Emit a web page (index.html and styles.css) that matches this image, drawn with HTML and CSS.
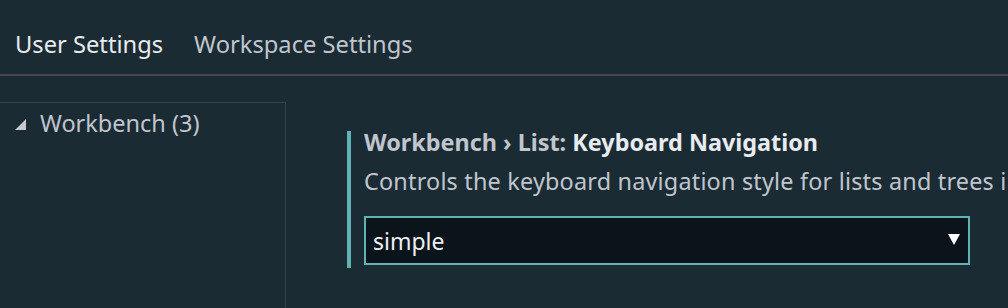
FILE: index.html
```html
<!DOCTYPE html>
<html>
<head>
<meta charset="utf-8">
<link rel="stylesheet" href="styles.css">
</head>
<body>
<div class="tabs">
  <span class="tab active">User Settings</span>
  <span class="tab">Workspace Settings</span>
</div>
<div class="content">
  <div class="toc">
    <div class="toc-item">
      <svg class="twistie" width="11" height="11" viewBox="0 0 11 11"><polygon points="11,0 11,11 0,11" fill="#c5c8cc"/></svg>
      <span class="toc-label">Workbench (3)</span>
    </div>
  </div>
  <div class="main">
    <div class="setting">
      <div class="title"><span class="cat">Workbench › List: </span><span class="name">Keyboard Navigation</span></div>
      <div class="desc">Controls the keyboard navigation style for lists and trees in the workbench. Can be simple, highlight and filter.</div>
      <div class="select"><span class="value">simple</span><svg class="arrow" width="12" height="11" viewBox="0 0 12 11"><polygon points="0,0 12,0 6,11" fill="#ffffff"/></svg></div>
    </div>
  </div>
</div>
</body>
</html>
```
FILE: styles.css
```css
html, body {
  margin: 0;
  padding: 0;
  width: 1008px;
  height: 308px;
  overflow: hidden;
  background: #1b2b34;
  font-family: "Noto Sans", "Open Sans", sans-serif;
}
.tabs {
  height: 76px;
  display: flex;
  align-items: center;
  gap: 31px;
  padding-left: 15px;
  padding-top: 14px;
  box-sizing: border-box;
  border-bottom: 2px solid #48474a;
}
.tab {
  font-size: 23.7px;
  line-height: 30px;
  color: #c0c5ce;
}
.tab.active {
  color: #e8eaee;
}
.content {
  display: flex;
  padding-top: 26px;
  height: 232px;
  box-sizing: border-box;
}
.toc {
  width: 286px;
  flex: none;
  border-top: 1px solid #34434c;
  border-right: 1px solid #34434c;
  box-sizing: border-box;
}
.toc-item {
  display: flex;
  align-items: center;
  height: 40px;
  padding-left: 15px;
}
.twistie {
  flex: none;
  margin-top: 2px;
}
.toc-label {
  margin-left: 14px;
  font-size: 23.5px;
  line-height: 30px;
  color: #c0c5ce;
}
.main {
  flex: 1;
  min-width: 0;
  padding-left: 61px;
  overflow: hidden;
}
.setting {
  margin-top: 29px;
  border-left: 4px solid #5fb3b3;
  padding-left: 13px;
  padding-bottom: 3px;
}
.title {
  font-size: 23.4px;
  font-weight: bold;
  line-height: 22px;
  white-space: nowrap;
}
.cat {
  color: #c0c5ce;
}
.name {
  color: #e8ebef;
}
.desc {
  margin-top: 14px;
  font-size: 23.4px;
  letter-spacing: 0.2px;
  line-height: 28px;
  color: #c0c5ce;
  white-space: nowrap;
}
.select {
  margin-top: 21px;
  width: 606px;
  height: 49px;
  box-sizing: border-box;
  border: 2px solid #5fb3b3;
  background: #0c141b;
  display: flex;
  align-items: center;
  justify-content: space-between;
  padding: 0 8px 0 7px;
}
.value {
  font-size: 23px;
  line-height: 28px;
  color: #eef0f3;
}
.arrow {
  flex: none;
  margin-top: -2px;
}
```
